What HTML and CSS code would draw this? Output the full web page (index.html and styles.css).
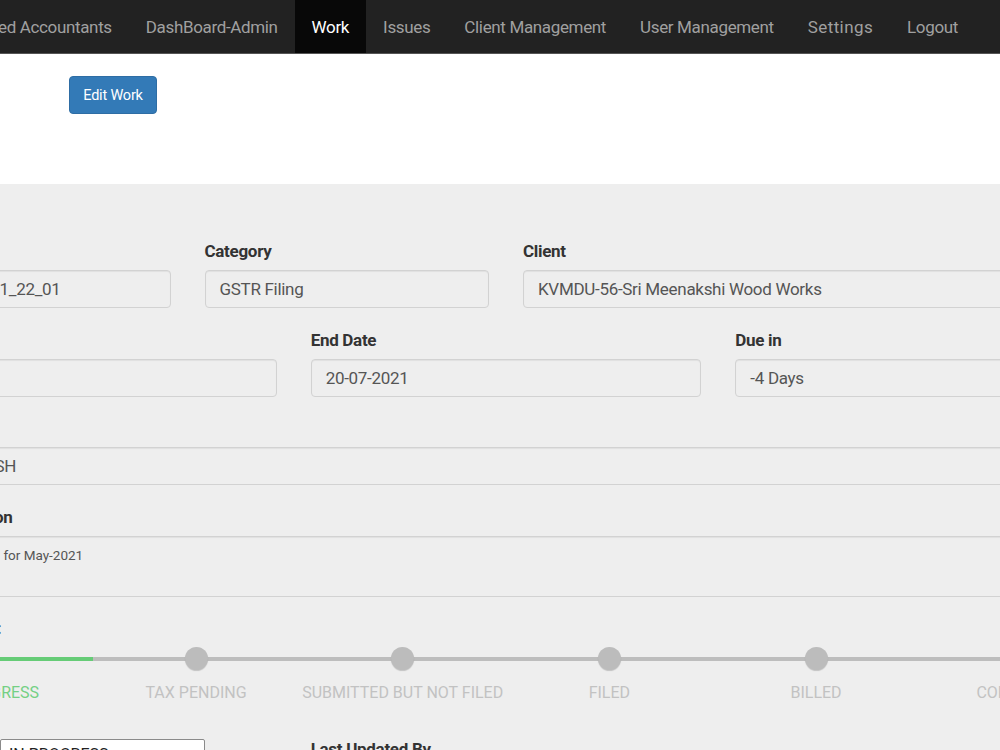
FILE: index.html
```html
<!DOCTYPE html>
<html lang="en">
<head>
<meta charset="utf-8">
<title>Work</title>
<link rel="stylesheet" href="styles.css">
</head>
<body>
<div class="viewport">
  <nav class="navbar">
    <ul class="nav">
      <li><a href="#">Sri Chartered Accountants</a></li>
      <li><a href="#">DashBoard-Admin</a></li>
      <li class="active"><a href="#">Work</a></li>
      <li><a href="#">Issues</a></li>
      <li><a href="#">Client Management</a></li>
      <li><a href="#">User Management</a></li>
      <li class="wide"><a href="#">Settings</a></li>
      <li><a href="#">Logout</a></li>
    </ul>
  </nav>

  <div class="toolbar">
    <button class="btn btn-primary" type="button">Edit Work</button>
  </div>

  <main class="panel">
    <div class="panel-inner">
      <div class="row">
        <div class="form-group col-3">
          <label class="label">Work ID</label>
          <div class="input">WK_GST_2021_22_01</div>
        </div>
        <div class="form-group col-3">
          <label class="label">Category</label>
          <div class="input">GSTR Filing</div>
        </div>
        <div class="form-group col-6">
          <label class="label">Client</label>
          <div class="input">KVMDU-56-Sri Meenakshi Wood Works</div>
        </div>
      </div>

      <div class="row">
        <div class="form-group col-4">
          <label class="label">Start Date</label>
          <div class="input">01-06-2021</div>
        </div>
        <div class="form-group col-4">
          <label class="label">End Date</label>
          <div class="input">20-07-2021</div>
        </div>
        <div class="form-group col-4">
          <label class="label">Due in</label>
          <div class="input">-4 Days</div>
        </div>
      </div>

      <div class="form-group">
        <label class="label">Staff</label>
        <div class="input">RAMU GANESH</div>
      </div>

      <div class="form-group">
        <label class="label">Work Description</label>
        <div class="textarea">GSTR-3B Return for May-2021</div>
      </div>

      <div class="form-group status-group">
        <label class="label">Current Status :</label>
        <ul class="progress">
          <li class="step active"><span class="dot"></span><span class="step-label">IN PROGRESS</span></li>
          <li class="step"><span class="dot"></span><span class="step-label">TAX PENDING</span></li>
          <li class="step"><span class="dot"></span><span class="step-label">SUBMITTED BUT NOT FILED</span></li>
          <li class="step"><span class="dot"></span><span class="step-label">FILED</span></li>
          <li class="step"><span class="dot"></span><span class="step-label">BILLED</span></li>
          <li class="step"><span class="dot"></span><span class="step-label">COMPLETED</span></li>
        </ul>
      </div>

      <div class="row bottom-row">
        <div class="form-group col-4">
          <select class="status-select">
            <option>IN PROGRESS</option>
            <option>TAX PENDING</option>
            <option>SUBMITTED BUT NOT FILED</option>
            <option>FILED</option>
            <option>BILLED</option>
            <option>COMPLETED</option>
          </select>
        </div>
        <div class="form-group col-4">
          <label class="label">Last Updated By</label>
        </div>
        <div class="form-group col-4"></div>
      </div>
    </div>
  </main>
</div>
</body>
</html>
```

FILE: styles.css
```css
html, body {
  margin: 0;
  padding: 0;
  overflow: hidden;
  height: 750px;
}

body {
  font-family: Roboto, "Noto Sans", sans-serif;
  color: #333;
  background: #fff;
}

.viewport {
  width: 1000px;
  overflow: hidden;
}

/* NAVBAR */
.navbar {
  height: 53px;
  background: #222;
  border-bottom: 1px solid #555;
  overflow: hidden;
}

.nav {
  list-style: none;
  margin: 0;
  padding: 0 25px 0 0;
  display: flex;
  justify-content: flex-end;
  height: 53px;
}

.nav li {
  flex: none;
}

.nav a {
  display: block;
  padding: 0 17px;
  line-height: 54px;
  font-size: 17px;
  letter-spacing: -0.35px;
  color: #a0a0a0;
  text-decoration: none;
  white-space: nowrap;
}

.nav .wide a {
  letter-spacing: 0.4px;
}

.nav .active a {
  background: #080808;
  color: #fff;
}

/* TOOLBAR */
.toolbar {
  height: 130px;
  box-sizing: border-box;
  padding: 22px 0 0 69px;
}

.btn {
  font-family: inherit;
  font-size: 14.5px;
  letter-spacing: -0.2px;
  width: 88px;
  height: 38px;
  border-radius: 4px;
  cursor: pointer;
}

.btn-primary {
  background: #337ab7;
  border: 1px solid #2e6da4;
  color: #fff;
}

/* PANEL */
.panel {
  background: #eee;
  padding-top: 57px;
  min-height: 600px;
}

.panel-inner {
  margin-left: -114px;
  width: 1240px;
}

.row {
  display: grid;
  grid-template-columns: repeat(12, 1fr);
  column-gap: 34px;
}

.col-3 { grid-column: span 3; }
.col-4 { grid-column: span 4; }
.col-6 { grid-column: span 6; }

.form-group {
  margin-bottom: 21.5px;
}

.label {
  display: block;
  font-size: 17px;
  font-weight: 700;
  letter-spacing: -0.3px;
  line-height: 20px;
  height: 20px;
  margin-bottom: 9px;
  color: #333;
  white-space: nowrap;
}

.input {
  box-sizing: border-box;
  height: 38px;
  line-height: 36px;
  padding: 0 14px;
  border: 1px solid #d2d2d2;
  border-radius: 4px;
  background: #eee;
  box-shadow: inset 0 1px 1px rgba(0, 0, 0, 0.06);
  font-size: 17px;
  letter-spacing: -0.3px;
  color: #555;
  white-space: nowrap;
  overflow: hidden;
}

.textarea {
  box-sizing: border-box;
  height: 61px;
  padding: 9px 14px 9px 17px;
  border: 1px solid #d2d2d2;
  border-radius: 4px;
  background: #eee;
  box-shadow: inset 0 1px 1px rgba(0, 0, 0, 0.06);
  font-size: 13.5px;
  line-height: 18px;
  color: #555;
}

/* STATUS TRACKER */
.status-group {
  margin-bottom: 0;
}

.progress {
  list-style: none;
  margin: 8px 0 0;
  padding: 0;
  display: flex;
}

.step {
  flex: 1;
  position: relative;
  display: flex;
  flex-direction: column;
  align-items: center;
}

.step::after {
  content: "";
  position: absolute;
  left: 0;
  right: 0;
  top: 10px;
  height: 4px;
  background: #bdbdbd;
}

.step.active::after {
  background: #66cc77;
}

.dot {
  position: relative;
  z-index: 1;
  width: 23px;
  height: 23px;
  border-radius: 50%;
  background: #bcbcbc;
  box-shadow: 0 1px 1px rgba(0, 0, 0, 0.18);
}

.step.active .dot {
  width: 21px;
  height: 21px;
  margin-top: 1px;
  margin-bottom: 1px;
  background: #66cc77;
  box-shadow: none;
}

.step-label {
  margin-top: 13px;
  font-size: 16px;
  line-height: 20px;
  color: #c2c2c2;
  white-space: nowrap;
}

.step.active .step-label {
  color: #74d084;
}

/* BOTTOM ROW */
.bottom-row {
  margin-top: 36px;
}

.status-select {
  margin-left: 114px;
  width: 205px;
  height: 30px;
  font-family: inherit;
  font-size: 16px;
  color: #222;
  background: #fff;
  border: 1px solid #8a8a8a;
  border-radius: 2px;
  padding: 0 4px;
}
```
